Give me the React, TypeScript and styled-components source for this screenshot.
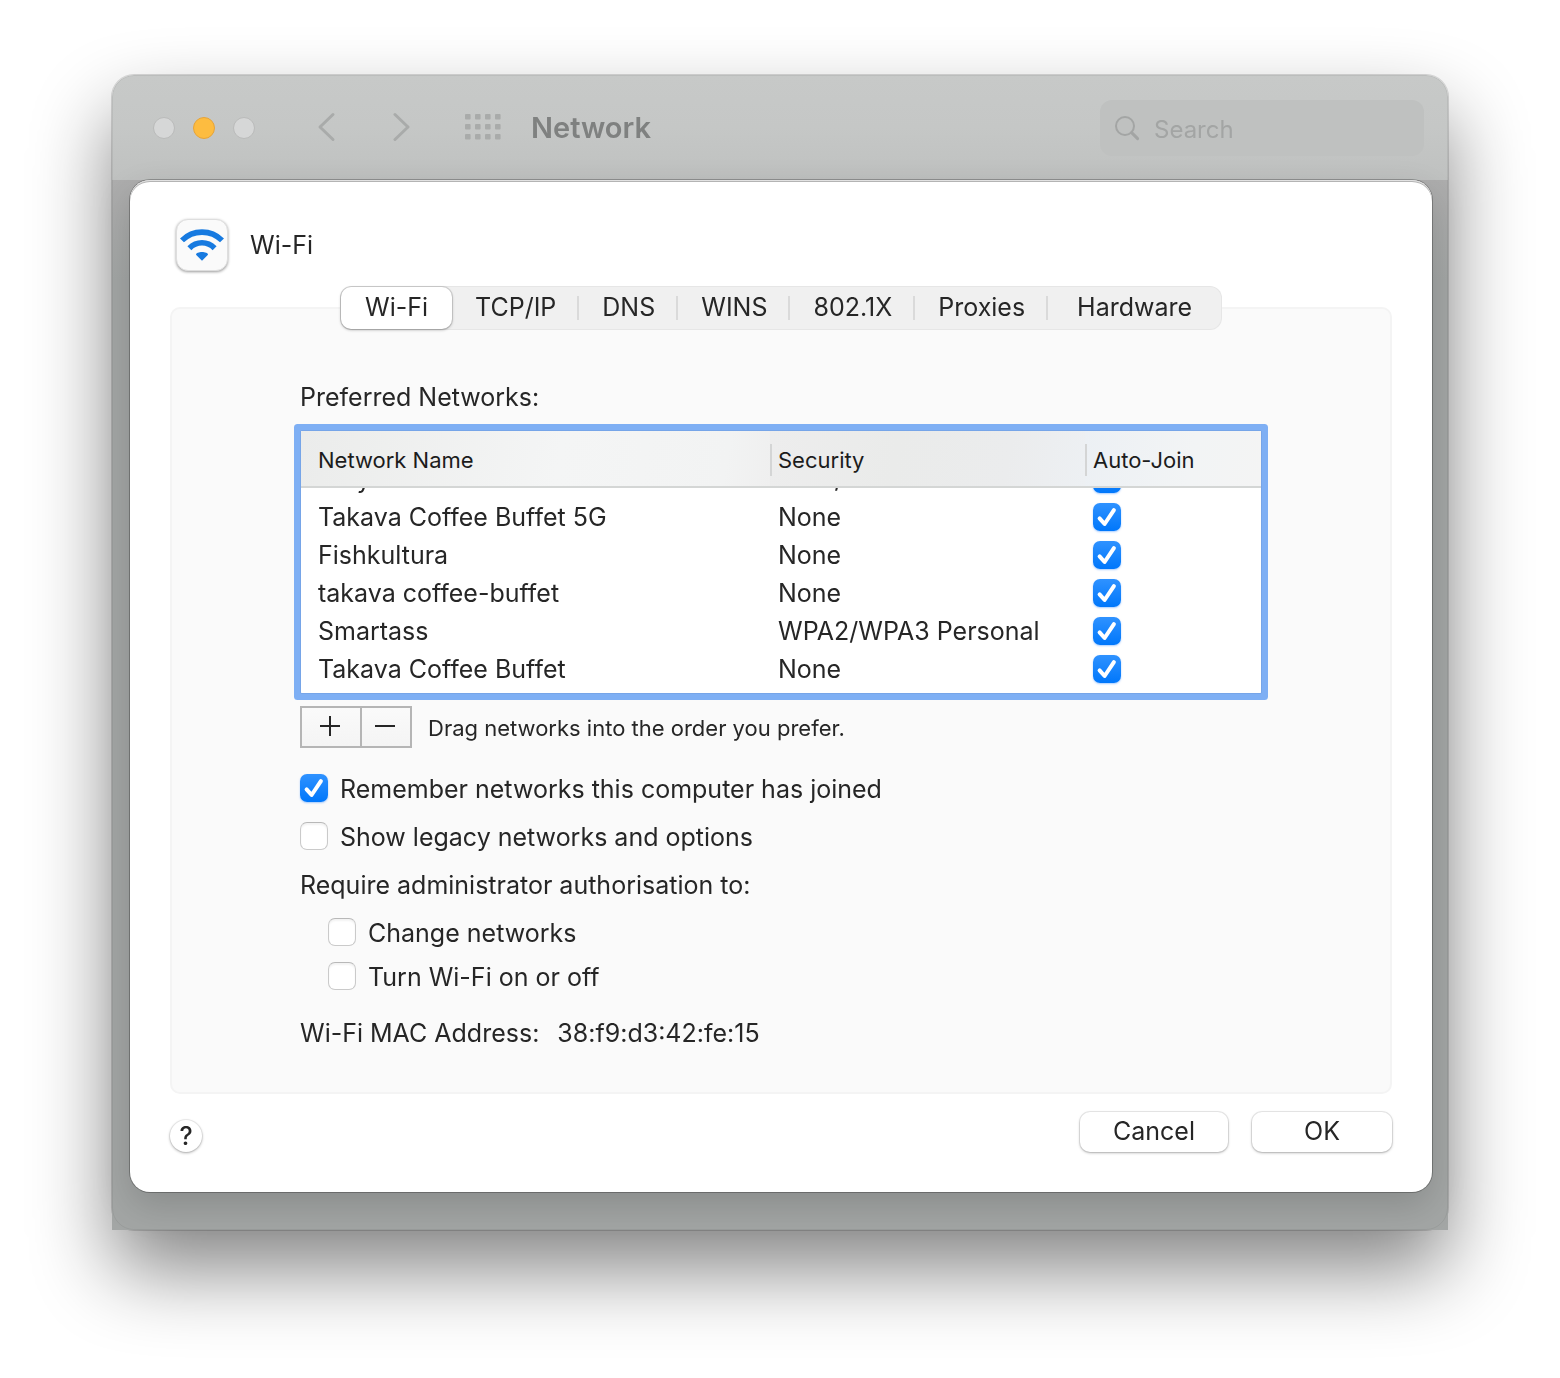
import React, { useLayoutEffect, useRef, useState } from 'react';
import styled, { createGlobalStyle, css } from 'styled-components';

const GlobalStyle = createGlobalStyle`
  * { box-sizing: border-box; }
  body {
    margin: 0;
    background: #fff;
    color: #262626;
    font-family: Inter, Roboto, "Liberation Sans", sans-serif;
    font-size: 25px;
    font-weight: 430;
    line-height: 32px;
  }
  button, input { font: inherit; color: inherit; }
  h1, h2, p, dl, dd { margin: 0; font: inherit; }
`;

const Page = styled.main`
  min-height: 100vh;
  padding: 75px 112px 148px;
  overflow: hidden;
`;

const Window = styled.section`
  position: relative;
  border-radius: 22px;
  box-shadow: 0 0 0 1px rgba(0, 0, 0, 0.14), 0 40px 80px rgba(0, 0, 0, 0.48);
  &::after {
    content: '';
    position: absolute;
    inset: 0;
    border: 1px solid rgba(0, 0, 0, 0.06);
    border-radius: 22px;
    pointer-events: none;
  }
`;

const TitleBar = styled.header`
  display: flex;
  align-items: center;
  height: 105px;
  padding: 0 24px 0 41px;
  border-radius: 22px 22px 0 0;
  background: linear-gradient(#c7c9c8, #c5c7c6 50%, #bfc1c0);
`;

const Lights = styled.div`
  display: flex;
  gap: 18px;
`;

const Light = styled.button<{ $active?: boolean }>`
  width: 22px;
  height: 22px;
  padding: 0;
  border-radius: 50%;
  border: 1px solid ${(p) => (p.$active ? '#e5a338' : '#b9bab9')};
  background: ${(p) => (p.$active ? '#fdbc40' : '#d6d7d7')};
`;

const IconButton = styled.button`
  display: flex;
  padding: 0 0 2px;
  border: 0;
  background: none;
  color: #a9abaa;
`;

const Navigation = styled.nav`
  display: flex;
  align-items: center;
  gap: 54px;
  margin: 0 30px 0 62px;
`;

const WindowTitle = styled.h1`
  flex: 1;
  color: #7f8180;
  font-size: 29px;
  font-weight: 600;
`;

const SearchField = styled.label`
  display: flex;
  align-items: center;
  gap: 14px;
  width: 324px;
  height: 56px;
  padding: 0 14px;
  border-radius: 12px;
  background: #bfc1c0;
  color: #a3a5a4;
`;

const SearchInput = styled.input`
  flex: 1;
  min-width: 0;
  padding: 4px 0 0;
  border: 0;
  outline: 0;
  background: none;
  font-size: 24px;
  font-weight: 400;
  &::placeholder { color: #a3a5a4; opacity: 1; }
`;

const WindowBody = styled.div`
  padding: 0 16px 38px 18px;
  background: linear-gradient(#adadad, #a3a6a5 100px);
`;

const Sheet = styled.div`
  padding: 39px 40px 40px;
  border-radius: 20px;
  background: #fff;
  box-shadow:
    inset 0 1px 0 #e2e2e2,
    inset 0 2px 0 #b4b4b4,
    0 0 0 1px rgba(0, 0, 0, 0.26),
    0 14px 36px rgba(0, 0, 0, 0.16);
`;

const ServiceHeading = styled.div`
  display: flex;
  align-items: center;
  gap: 22px;
  padding-left: 6px;
`;

const ServiceIcon = styled.div`
  display: grid;
  place-items: center;
  width: 52px;
  height: 52px;
  border: 1px solid #dedede;
  border-radius: 12px;
  background: #fafafa;
  box-shadow: 0 1px 3px rgba(0, 0, 0, 0.4);
`;

const TabList = styled.div`
  position: relative;
  display: flex;
  width: fit-content;
  min-width: 880px;
  height: 42px;
  margin: 16px auto -22px;
  border-radius: 11px;
  background: #f0f0f0;
  box-shadow: 0 0 0 1px #e6e6e6;
`;

const Tab = styled.button<{ $selected: boolean; $divided: boolean }>`
  position: relative;
  padding: 0 23px 2px;
  border: 0;
  border-radius: 10px;
  background: transparent;
  line-height: 38px;
  &:first-child { padding-left: 24px; padding-right: 24px; }
  &:last-child { flex: 1; }
  ${(p) =>
    p.$selected &&
    css`
      background: #fff;
      box-shadow: 0 0 0 1px rgba(0, 0, 0, 0.1), 0 1px 3px rgba(0, 0, 0, 0.3);
    `}
  ${(p) =>
    p.$divided &&
    css`
      &::after {
        content: '';
        position: absolute;
        top: 9px;
        right: 0;
        width: 2px;
        height: 24px;
        background: #dadada;
      }
    `}
`;

const Panel = styled.div`
  padding: 72px 129px 43px 128px;
  border: 2px solid #f4f4f4;
  border-radius: 10px;
  background: #fafafa;
`;

const TableFrame = styled.div`
  height: 262px;
  margin: 18px 0 13px 1px;
  overflow: auto;
  scrollbar-width: none;
  background: #fff;
  border-radius: 1px;
  box-shadow: 0 0 0 1px #76a5e8, 0 0 0 7px #7eaff4;
`;

const Table = styled.table`
  width: 100%;
  margin-bottom: 5px;
  border-collapse: separate;
  border-spacing: 0;
  table-layout: fixed;
`;

const NameCol = styled.col` width: 469px; `;
const SecurityCol = styled.col` width: 315px; `;

const HeadCell = styled.th<{ $tint: string }>`
  position: sticky;
  top: 0;
  z-index: 1;
  height: 57px;
  padding: 2px 0 0 8px;
  border-bottom: 2px solid #d4d6d5;
  background: ${(p) => p.$tint};
  color: #1c1c1c;
  font-size: 22px;
  font-weight: 400;
  text-align: left;
  &:first-child { padding-left: 17px; }
  &:not(:first-child)::before {
    content: '';
    position: absolute;
    top: 13px;
    left: 0;
    width: 2px;
    height: 32px;
    background: #d4d5d5;
  }
`;

const Cell = styled.td`
  height: 38px;
  padding: 0 0 0 8px;
  white-space: nowrap;
  &:first-child { padding-left: 17px; }
`;

const CheckHolder = styled.span`
  position: relative;
  display: flex;
  flex: none;
  width: 28px;
  height: 28px;
  svg {
    position: absolute;
    inset: 0;
    pointer-events: none;
  }
`;

const CheckInput = styled.input`
  appearance: none;
  width: 28px;
  height: 28px;
  margin: 0;
  border: 1px solid #cacaca;
  border-top-color: #b8b8b8;
  border-radius: 7px;
  background: #fff;
  box-shadow: inset 0 2px 2px rgba(0, 0, 0, 0.05);
  & + svg { display: none; }
  &:checked {
    border: 0;
    background: linear-gradient(#2f92ff, #0077fb);
    box-shadow: 0 1px 2px rgba(0, 110, 255, 0.35);
  }
  &:checked + svg { display: block; }
`;

const ListActions = styled.div`
  display: flex;
  align-items: center;
  gap: 16px;
  font-size: 22px;
  p { padding-top: 2px; }
`;

const ActionGroup = styled.div`
  display: grid;
  grid-template-columns: 58px 48px;
  gap: 2px;
  padding: 2px;
  background: #b5b5b5;
  height: 42px;
`;

const ActionButton = styled.button`
  display: grid;
  place-items: center;
  padding: 0 2px 2px 0;
  border: 0;
  background: linear-gradient(#fafafa, #f4f4f4);
`;

const Options = styled.div`
  display: grid;
  gap: 16px;
  margin: 25px 0 24px;
`;

const NestedOptions = styled.div`
  display: grid;
  gap: 12px;
  padding-left: 28px;
`;

const Option = styled.label`
  display: flex;
  align-items: flex-start;
  gap: 12px;
  ${CheckHolder} { margin-top: 1px; }
`;

const Address = styled.dl`
  display: flex;
  gap: 18px;
`;

const Footer = styled.footer`
  display: flex;
  gap: 24px;
  padding-top: 18px;
`;

const PushButton = styled.button<{ $width: number }>`
  width: ${(p) => p.$width}px;
  height: 40px;
  padding: 0 0 2px;
  border: 0;
  border-radius: 10px;
  background: #fff;
  box-shadow: 0 0 0 1px rgba(0, 0, 0, 0.08), 0 1px 3px rgba(0, 0, 0, 0.28);
`;

const HelpButton = styled.button`
  align-self: flex-end;
  width: 32px;
  height: 32px;
  margin-right: auto;
  padding: 0;
  border: 0;
  border-radius: 50%;
  background: #fff;
  font-weight: 500;
  box-shadow: 0 0 0 1px rgba(0, 0, 0, 0.06), 0 1px 3px rgba(0, 0, 0, 0.32);
`;

type CheckboxProps = { label?: string; defaultChecked?: boolean };

function Checkbox({ label, defaultChecked }: CheckboxProps) {
  return (
    <CheckHolder>
      <CheckInput type="checkbox" aria-label={label} defaultChecked={defaultChecked} />
      <svg width="28" height="28" viewBox="0 0 28 28" fill="none" aria-hidden="true">
        <path d="M6.6 15.4 L11.6 21 L20.9 7.2" stroke="#fff" strokeWidth="4" strokeLinecap="round" strokeLinejoin="round" />
      </svg>
    </CheckHolder>
  );
}

function Chevron({ d }: { d: string }) {
  return (
    <svg width="20" height="30" viewBox="0 0 20 30" fill="none" stroke="currentColor" strokeWidth="3" strokeLinecap="round" strokeLinejoin="round">
      <path d={d} />
    </svg>
  );
}

function GridIcon() {
  return (
    <svg width="36" height="26" viewBox="0 0 36 26" fill="currentColor">
      {[0, 10, 20].map((y) =>
        [0, 10, 20, 30].map((x) => <rect key={`${x}-${y}`} x={x} y={y} width="5.6" height="5.6" rx="1" />),
      )}
    </svg>
  );
}

function WifiIcon() {
  return (
    <svg width="46" height="34" viewBox="0 0 46 34" fill="none" stroke="#177ae0" strokeWidth="5.6">
      <path d="M3 12.4 C14 1.3 32 1.3 43 12.4" />
      <path d="M10.4 20.2 C17.5 13 28.5 13 35.6 20.2" />
      <path d="M17 26.8 C17 23 29 23 29 26.8 L23 32.8 Z" fill="#177ae0" stroke="none" />
    </svg>
  );
}

const tabs = ['Wi-Fi', 'TCP/IP', 'DNS', 'WINS', '802.1X', 'Proxies', 'Hardware'];

const networks = [
  { name: 'Galyna', security: 'WPA/WPA2 Personal' },
  { name: 'Takava Coffee Buffet 5G', security: 'None' },
  { name: 'Fishkultura', security: 'None' },
  { name: 'takava coffee-buffet', security: 'None' },
  { name: 'Smartass', security: 'WPA2/WPA3 Personal' },
  { name: 'Takava Coffee Buffet', security: 'None' },
];

export default function App() {
  const [tab, setTab] = useState('Wi-Fi');
  const list = useRef<HTMLDivElement>(null);

  // The list opens scrolled to its last network.
  useLayoutEffect(() => {
    if (list.current) list.current.scrollTop = list.current.scrollHeight;
  }, []);

  return (
    <>
      <GlobalStyle />
      <Page>
        <Window>
          <TitleBar>
            <Lights>
              <Light aria-label="Close" />
              <Light aria-label="Minimise" $active />
              <Light aria-label="Zoom" />
            </Lights>
            <Navigation>
              <IconButton aria-label="Back"><Chevron d="M16 2.5 L3 15 L16 27.5" /></IconButton>
              <IconButton aria-label="Forward"><Chevron d="M4 2.5 L17 15 L4 27.5" /></IconButton>
              <IconButton aria-label="Show all"><GridIcon /></IconButton>
            </Navigation>
            <WindowTitle>Network</WindowTitle>
            <SearchField>
              <svg width="26" height="26" viewBox="0 0 26 26" fill="none" stroke="currentColor" strokeLinecap="round" aria-hidden="true">
                <circle cx="11" cy="11" r="9" strokeWidth="2" />
                <path d="M17.6 17.6 L23.6 23.6" strokeWidth="3" />
              </svg>
              <SearchInput type="search" placeholder="Search" aria-label="Search" />
            </SearchField>
          </TitleBar>
          <WindowBody>
            <Sheet>
              <ServiceHeading>
                <ServiceIcon><WifiIcon /></ServiceIcon>
                <h2>Wi-Fi</h2>
              </ServiceHeading>
              <TabList role="tablist">
                {tabs.map((name, i) => (
                  <Tab
                    key={name}
                    role="tab"
                    aria-selected={tab === name}
                    $selected={tab === name}
                    $divided={tab !== name && i < tabs.length - 1}
                    onClick={() => setTab(name)}
                  >
                    {name}
                  </Tab>
                ))}
              </TabList>
              <Panel>
                <p>Preferred Networks:</p>
                <TableFrame ref={list}>
                  <Table>
                    <colgroup>
                      <NameCol />
                      <SecurityCol />
                      <col />
                    </colgroup>
                    <thead>
                      <tr>
                        <HeadCell $tint="linear-gradient(100deg, #ebeceb, #f4f5f5 55%, #f2f3f3 90%, #efefef)">Network Name</HeadCell>
                        <HeadCell $tint="linear-gradient(100deg, #ededed, #eaebea 40%, #ebeced 75%, #edf0f3)">Security</HeadCell>
                        <HeadCell $tint="linear-gradient(100deg, #ecf0f4, #f2f4f5 60%, #f4f4f4)">Auto-Join</HeadCell>
                      </tr>
                    </thead>
                    <tbody>
                      {networks.map((n) => (
                        <tr key={n.name}>
                          <Cell>{n.name}</Cell>
                          <Cell>{n.security}</Cell>
                          <Cell><Checkbox label={`Auto-join ${n.name}`} defaultChecked /></Cell>
                        </tr>
                      ))}
                    </tbody>
                  </Table>
                </TableFrame>
                <ListActions>
                  <ActionGroup>
                    <ActionButton aria-label="Add network">
                      <svg width="22" height="22" viewBox="0 0 22 22" stroke="#262626" strokeWidth="2"><path d="M1 11h20M11 1v20" /></svg>
                    </ActionButton>
                    <ActionButton aria-label="Remove network">
                      <svg width="22" height="22" viewBox="0 0 22 22" stroke="#262626" strokeWidth="2"><path d="M1 11h20" /></svg>
                    </ActionButton>
                  </ActionGroup>
                  <p>Drag networks into the order you prefer.</p>
                </ListActions>
                <Options>
                  <Option><Checkbox defaultChecked />Remember networks this computer has joined</Option>
                  <Option><Checkbox />Show legacy networks and options</Option>
                  <p>Require administrator authorisation to:</p>
                  <NestedOptions>
                    <Option><Checkbox />Change networks</Option>
                    <Option><Checkbox />Turn Wi-Fi on or off</Option>
                  </NestedOptions>
                </Options>
                <Address>
                  <dt>Wi-Fi MAC Address:</dt>
                  <dd>38:f9:d3:42:fe:15</dd>
                </Address>
              </Panel>
              <Footer>
                <HelpButton aria-label="Help">?</HelpButton>
                <PushButton $width={148}>Cancel</PushButton>
                <PushButton $width={140}>OK</PushButton>
              </Footer>
            </Sheet>
          </WindowBody>
        </Window>
      </Page>
    </>
  );
}
